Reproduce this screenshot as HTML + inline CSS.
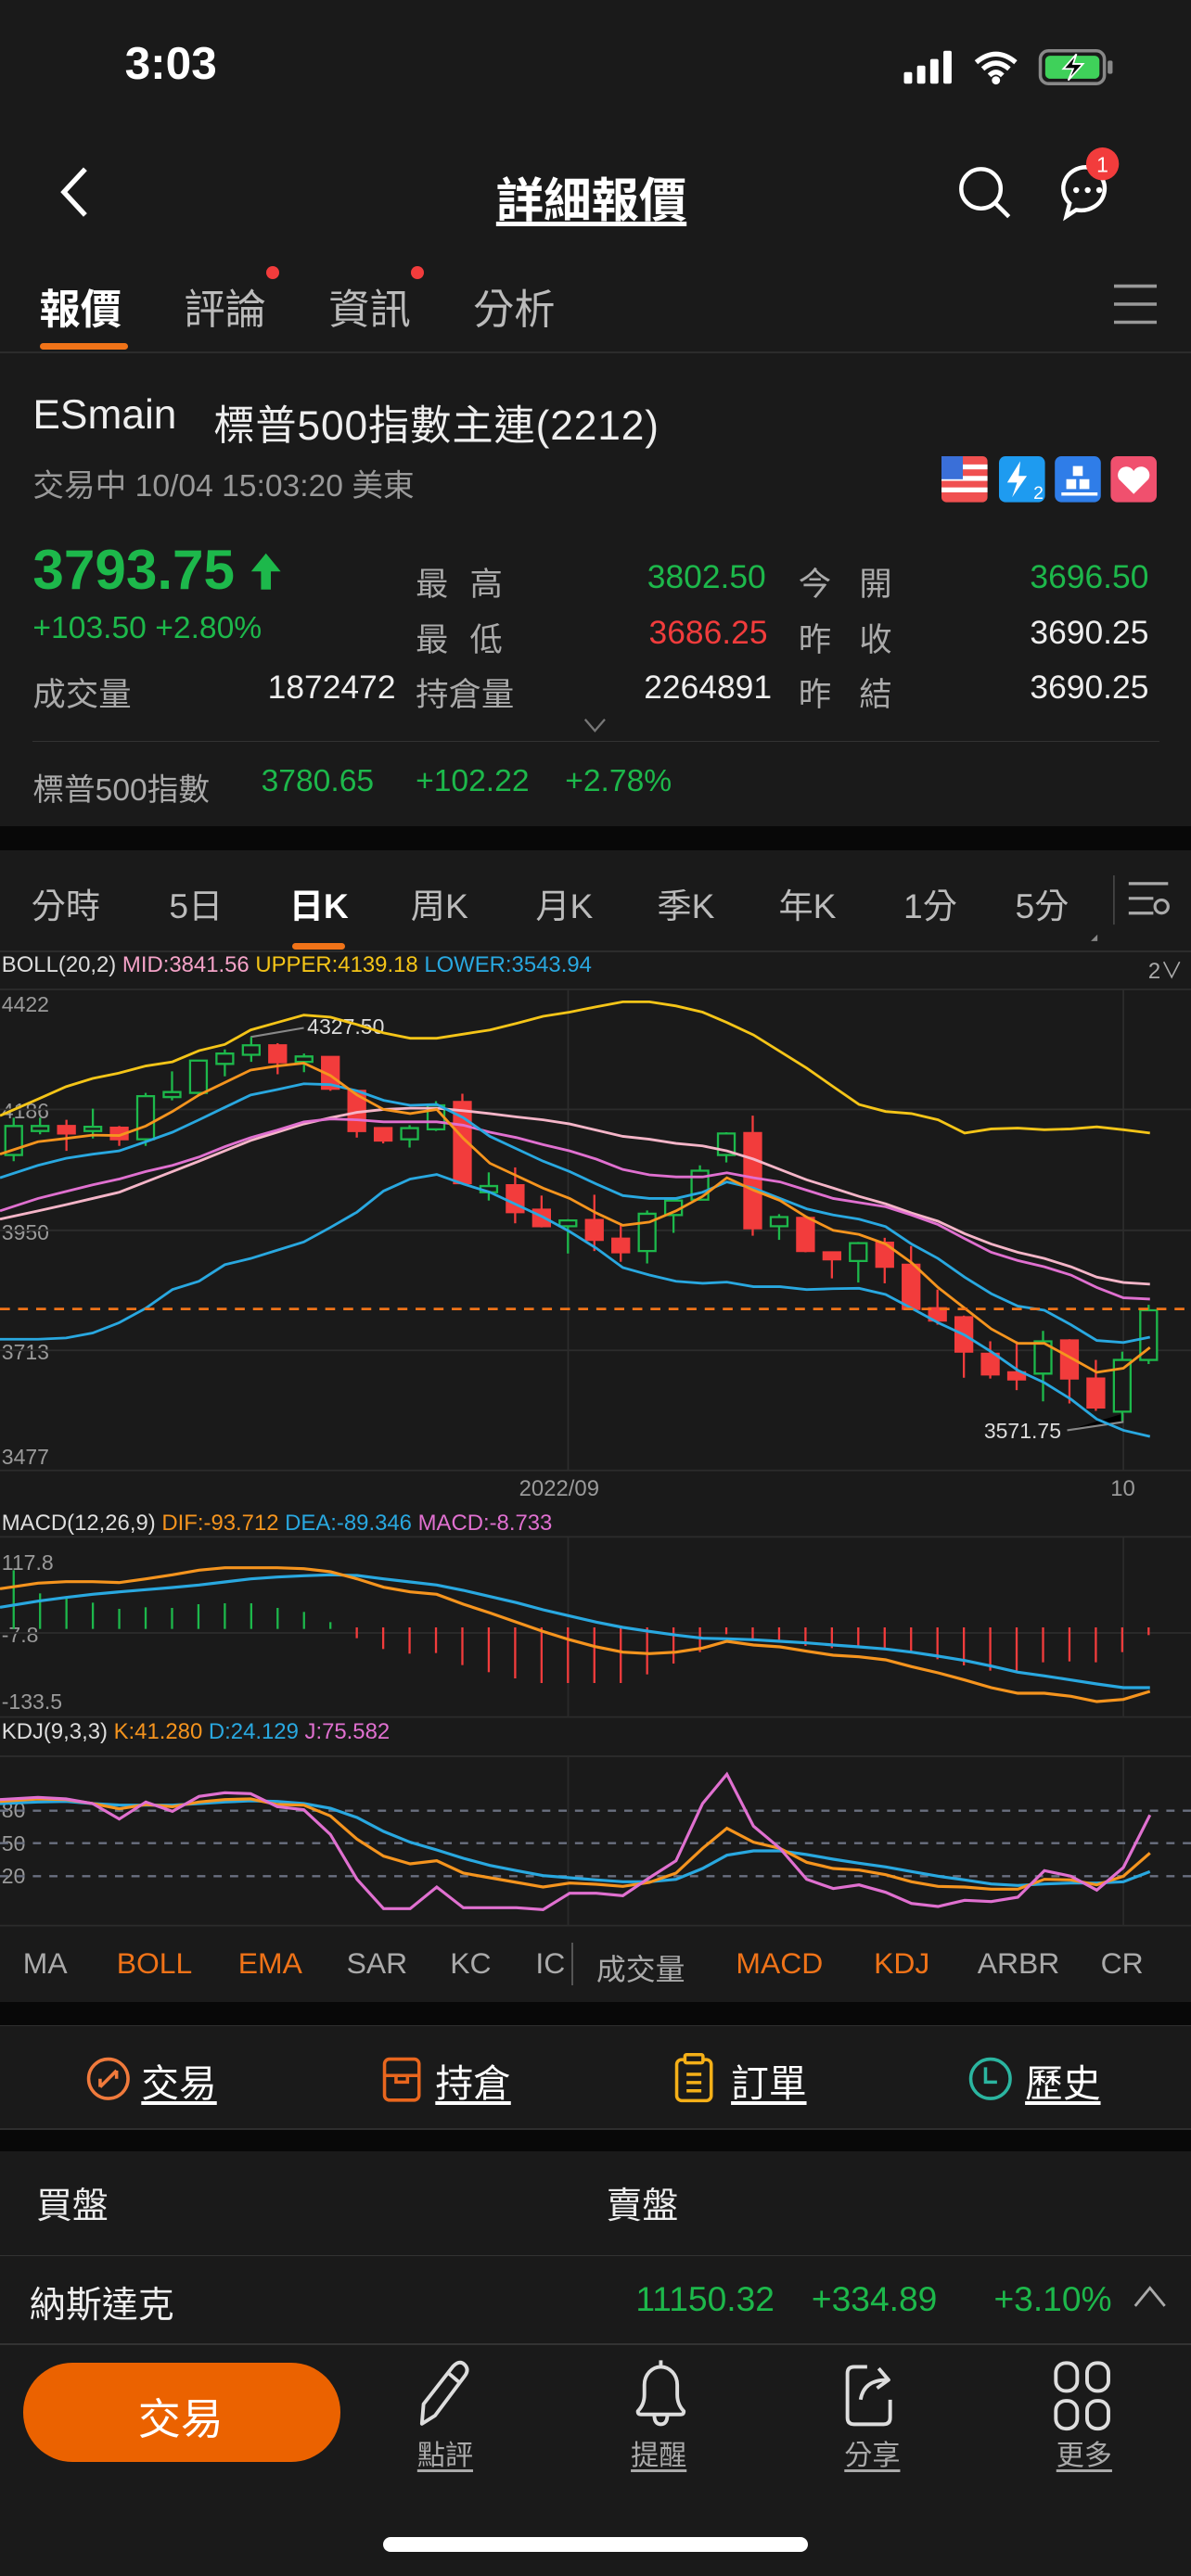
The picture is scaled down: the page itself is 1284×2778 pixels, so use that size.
<!DOCTYPE html>
<html><head><meta charset="utf-8">
<style>
html,body{margin:0;padding:0;background:#1a1a1a;}
body{zoom:1.771;width:725px;height:1568.6px;position:relative;overflow:hidden;font-family:"Liberation Sans","Noto Sans CJK TC",sans-serif;color:#e6e6e6;}
.a{position:absolute;white-space:nowrap;}
.g{color:#1db84b}.r{color:#f23c3c}.o{color:#f07318}.gr{color:#9a9a9a}
.band{position:absolute;left:0;width:725px;background:#080808;}
.u{text-decoration:underline;text-underline-offset:3px;}
svg{position:absolute;overflow:visible}
</style></head><body>
<div class="a" style="left:76px;top:22px;font-size:28px;font-weight:bold;color:#fff">3:03</div>
<svg style="left:548px;top:30px" width="130" height="24">
<rect x="2" y="14" width="5" height="7" rx="1" fill="#fff"/><rect x="10" y="10" width="5" height="11" rx="1" fill="#fff"/><rect x="18" y="6" width="5" height="15" rx="1" fill="#fff"/><rect x="26" y="1" width="5" height="20" rx="1" fill="#fff"/>
<path d="M46 8 Q58 -2 70 8 M50 12 Q58 5 66 12 M54 16 Q58 12 62 16" stroke="#fff" stroke-width="3" fill="none"/><circle cx="58" cy="19" r="2.5" fill="#fff"/>
<rect x="85" y="1" width="39" height="20" rx="5" fill="none" stroke="#888" stroke-width="2"/><rect x="88" y="4" width="33" height="14" rx="3" fill="#3fd15a"/><rect x="126" y="7" width="3" height="8" rx="1" fill="#888"/>
<path d="M107 3 L99 12 H105 L102 19 L111 9 H105 Z" fill="#000" stroke="#fff" stroke-width="1"/>
</svg>
<svg style="left:34px;top:100px" width="24" height="36"><path d="M18 3 L5 17 L18 31" stroke="#fff" stroke-width="3" fill="none"/></svg>
<div class="a u" style="left:302px;top:98px;font-size:29px;font-weight:bold;color:#fff">詳細報價</div>
<svg style="left:582px;top:100px" width="36" height="36"><circle cx="15" cy="15" r="12" stroke="#fff" stroke-width="2.5" fill="none"/><path d="M24 24 L32 32" stroke="#fff" stroke-width="2.5"/></svg>
<svg style="left:643px;top:90px" width="48" height="46"><path d="M18 12 A14 13 0 1 1 12 38 L6 42 L8 34 A14 13 0 0 1 18 12Z" stroke="#fff" stroke-width="2.5" fill="none"/><circle cx="12" cy="26" r="1.8" fill="#fff"/><circle cx="19" cy="26" r="1.8" fill="#fff"/><circle cx="26" cy="26" r="1.8" fill="#fff"/><circle cx="28" cy="10" r="10" fill="#f23c3c"/><text x="28" y="15" font-size="13" fill="#fff" text-anchor="middle" font-family="Liberation Sans">1</text></svg>
<div class="a" style="left:24px;top:168px;font-size:25px;font-weight:bold;color:#fff">報價</div>
<div class="a" style="left:24px;top:209px;width:54px;height:4px;background:#f07318;border-radius:2px"></div>
<div class="a" style="left:112px;top:168px;font-size:25px;color:#bbb">評論</div>
<div class="a" style="left:162px;top:162px;width:8px;height:8px;border-radius:4px;background:#f23c3c"></div>
<div class="a" style="left:200px;top:168px;font-size:25px;color:#bbb">資訊</div>
<div class="a" style="left:250px;top:162px;width:8px;height:8px;border-radius:4px;background:#f23c3c"></div>
<div class="a" style="left:288px;top:168px;font-size:25px;color:#bbb">分析</div>
<svg style="left:678px;top:172px" width="28" height="28"><path d="M0 2H26M0 13H26M0 24H26" stroke="#999" stroke-width="2"/></svg>
<div class="a" style="left:0;top:214px;width:725px;height:1px;background:#2c2c2c"></div>
<div class="a" style="left:20px;top:239px;font-size:25px;color:#eee">ESmain</div>
<div class="a" style="left:130px;top:239px;font-size:25px;color:#eee;letter-spacing:0.5px">標普500指數主連(2212)</div>
<div class="a" style="left:20px;top:280px;font-size:19px;color:#999">交易中 10/04 15:03:20 美東</div>
<svg style="left:573px;top:278px" width="132" height="30">
<rect x="0" y="0" width="28" height="28" rx="3" fill="#f05050"/><rect x="0" y="5" width="28" height="3" fill="#fff"/><rect x="0" y="12" width="28" height="3" fill="#fff"/><rect x="0" y="19" width="28" height="3" fill="#fff"/><rect x="0" y="0" width="13" height="14" fill="#3a6fd8"/>
<rect x="35" y="0" width="28" height="28" rx="4" fill="#1e9bf0"/><path d="M48 3 L40 16 H46 L43 25 L52 12 H47 Z" fill="#fff"/><text x="56" y="26" font-size="11" fill="#fff" font-family="Liberation Sans">2</text>
<rect x="69" y="0" width="28" height="28" rx="4" fill="#2f7de8"/><path d="M80 6h6v6h-6zM76 14h6v6h-6zM84 14h6v6h-6zM73 22h22v2h-22z" fill="#fff"/>
<rect x="103" y="0" width="28" height="28" rx="4" fill="#f0506e"/><path d="M117 23 L108 14 A5 5 0 0 1 117 9 A5 5 0 0 1 126 14 Z" fill="#fff"/>
</svg>
<div class="a g" style="left:20px;top:327px;font-size:34px;font-weight:bold">3793.75</div>
<svg style="left:152px;top:336px" width="22" height="24"><path d="M10 1 L19 12 H13 V23 H7 V12 H1 Z" fill="#1db84b"/></svg>
<div class="a g" style="left:20px;top:372px;font-size:19px">+103.50 +2.80%</div>
<div class="a" style="left:20px;top:407px;font-size:20px;color:#aaa">成交量</div>
<div class="a" style="left:163px;top:407px;font-size:20px;color:#eee">1872472</div>
<div class="a" style="left:253px;top:340px;font-size:20px;color:#aaa;letter-spacing:13px">最高</div>
<div class="a" style="left:253px;top:374px;font-size:20px;color:#aaa;letter-spacing:13px">最低</div>
<div class="a" style="left:253px;top:407px;font-size:20px;color:#aaa">持倉量</div>
<div class="a g" style="left:394px;top:340px;font-size:20px">3802.50</div>
<div class="a r" style="left:395px;top:374px;font-size:20px">3686.25</div>
<div class="a" style="left:392px;top:407px;font-size:20px;color:#eee">2264891</div>
<div class="a" style="left:486px;top:340px;font-size:20px;color:#aaa;letter-spacing:17px">今開</div>
<div class="a" style="left:486px;top:374px;font-size:20px;color:#aaa;letter-spacing:17px">昨收</div>
<div class="a" style="left:486px;top:407px;font-size:20px;color:#aaa;letter-spacing:17px">昨結</div>
<div class="a g" style="left:627px;top:340px;font-size:20px">3696.50</div>
<div class="a" style="left:627px;top:374px;font-size:20px;color:#eee">3690.25</div>
<div class="a" style="left:627px;top:407px;font-size:20px;color:#eee">3690.25</div>
<svg style="left:355px;top:437px" width="14" height="10"><path d="M1 1 L7 8 L13 1" stroke="#777" stroke-width="1.3" fill="none"/></svg>
<div class="a" style="left:20px;top:451px;width:686px;height:1px;background:#333"></div>
<div class="a" style="left:20px;top:465px;font-size:19px;color:#aaa">標普500指數</div>
<div class="a g" style="left:159px;top:465px;font-size:19px">3780.65</div>
<div class="a g" style="left:253px;top:465px;font-size:19px">+102.22</div>
<div class="a g" style="left:344px;top:465px;font-size:19px">+2.78%</div>
<div class="band" style="top:503px;height:15px"></div>
<div class="a" style="left:19px;top:535px;font-size:21px;color:#bbb">分時</div>
<div class="a" style="left:103px;top:535px;font-size:21px;color:#bbb">5日</div>
<div class="a" style="left:176px;top:535px;font-size:21px;color:#fff;font-weight:bold">日K</div>
<div class="a" style="left:178px;top:574px;width:32px;height:4px;background:#f07318;border-radius:2px"></div>
<div class="a" style="left:250px;top:535px;font-size:21px;color:#bbb">周K</div>
<div class="a" style="left:326px;top:535px;font-size:21px;color:#bbb">月K</div>
<div class="a" style="left:400px;top:535px;font-size:21px;color:#bbb">季K</div>
<div class="a" style="left:474px;top:535px;font-size:21px;color:#bbb">年K</div>
<div class="a" style="left:550px;top:535px;font-size:21px;color:#bbb">1分</div>
<div class="a" style="left:618px;top:535px;font-size:21px;color:#bbb">5分</div>
<svg style="left:660px;top:533px" width="55" height="40"><path d="M18 0V30" stroke="#444"/><path d="M8 36 L8 40 L4 40Z" fill="#888"/><path d="M27 5H51M27 14H42M27 23H42" stroke="#aaa" stroke-width="1.8"/><circle cx="47" cy="19" r="4" stroke="#aaa" stroke-width="1.8" fill="none"/></svg>
<div class="a" style="left:0;top:579px;width:725px;height:1px;background:#2c2c2c"></div>
<div class="a" style="left:1px;top:580px;font-size:13.5px"><span style="color:#ddd">BOLL(20,2)</span> <span style="color:#f5a3c8">MID:3841.56</span> <span style="color:#f5c518">UPPER:4139.18</span> <span style="color:#29a8e0">LOWER:3543.94</span></div>
<div class="a" style="left:699px;top:580px;font-size:13.5px;color:#aaa">2∨</div>
<div class="a gr" style="left:1px;top:604px;font-size:13px">4422</div>
<div class="a gr" style="left:1px;top:669px;font-size:13px">4186</div>
<div class="a gr" style="left:1px;top:743px;font-size:13px">3950</div>
<div class="a gr" style="left:1px;top:816px;font-size:13px">3713</div>
<div class="a gr" style="left:1px;top:880px;font-size:13px">3477</div>
<div class="a" style="left:187px;top:618px;font-size:13px;color:#ddd">4327.50</div>
<div class="a" style="left:599px;top:864px;font-size:13px;color:#ddd">3571.75</div>
<div class="a gr" style="left:316px;top:899px;font-size:13.5px">2022/09</div>
<div class="a gr" style="left:676px;top:899px;font-size:13.5px">10</div>
<svg id="main" style="left:0;top:564.6px" width="725" height="395.3" viewBox="0 0 1568 1568" preserveAspectRatio="none"></svg>
<div class="a" style="left:1px;top:920px;font-size:13.5px"><span style="color:#ddd">MACD(12,26,9)</span> <span style="color:#f5941e">DIF:-93.712</span> <span style="color:#29a8e0">DEA:-89.346</span> <span style="color:#e070d0">MACD:-8.733</span></div>
<div class="a gr" style="left:1px;top:944px;font-size:13px">117.8</div>
<div class="a gr" style="left:1px;top:988px;font-size:13px">-7.8</div>
<div class="a gr" style="left:1px;top:1029px;font-size:13px">-133.5</div>
<div class="a" style="left:1px;top:1047px;font-size:13.5px"><span style="color:#ddd">KDJ(9,3,3)</span> <span style="color:#f5941e">K:41.280</span> <span style="color:#29a8e0">D:24.129</span> <span style="color:#e070d0">J:75.582</span></div>
<div class="a gr" style="left:1px;top:1095px;font-size:13px">80</div>
<div class="a gr" style="left:1px;top:1115px;font-size:13px">50</div>
<div class="a gr" style="left:1px;top:1135px;font-size:13px">20</div>
<svg id="sub" style="left:0;top:931.7px" width="725" height="254.1" viewBox="0 -150 1568 1350" preserveAspectRatio="none"></svg>
<div class="a" style="left:14px;top:1185px;font-size:18px;color:#aaa">MA</div>
<div class="a o" style="left:71px;top:1185px;font-size:18px">BOLL</div>
<div class="a o" style="left:145px;top:1185px;font-size:18px">EMA</div>
<div class="a" style="left:211px;top:1185px;font-size:18px;color:#aaa">SAR</div>
<div class="a" style="left:274px;top:1185px;font-size:18px;color:#aaa">KC</div>
<div class="a" style="left:326px;top:1185px;font-size:18px;color:#aaa">IC</div>
<div class="a" style="left:348px;top:1183px;width:1px;height:26px;background:#555"></div>
<div class="a" style="left:363px;top:1185px;font-size:18px;color:#aaa">成交量</div>
<div class="a o" style="left:448px;top:1185px;font-size:18px">MACD</div>
<div class="a o" style="left:532px;top:1185px;font-size:18px">KDJ</div>
<div class="a" style="left:595px;top:1185px;font-size:18px;color:#aaa">ARBR</div>
<div class="a" style="left:670px;top:1185px;font-size:18px;color:#aaa">CR</div>
<div class="band" style="top:1219px;height:14px"></div>
<div class="a" style="left:0;top:1233px;width:725px;height:1px;background:#2e2e2e"></div>
<svg style="left:52px;top:1252px" width="28" height="28"><circle cx="14" cy="14" r="12" stroke="#f07a3c" stroke-width="2" fill="none"/><path d="M9 19 L19 9 M19 9 V14 M9 19 V14" stroke="#f07a3c" stroke-width="2" fill="none"/></svg>
<div class="a u" style="left:86px;top:1250px;font-size:23px;color:#fff">交易</div>
<svg style="left:232px;top:1252px" width="26" height="30"><rect x="2" y="2" width="21" height="25" rx="3" stroke="#e8661e" stroke-width="2" fill="none"/><path d="M2 12H23M9 12V16H16V12" stroke="#e8661e" stroke-width="2" fill="none"/></svg>
<div class="a u" style="left:265px;top:1250px;font-size:23px;color:#fff">持倉</div>
<svg style="left:410px;top:1250px" width="26" height="32"><rect x="2" y="4" width="21" height="25" rx="3" stroke="#f5b018" stroke-width="2" fill="none"/><rect x="7" y="1" width="11" height="5" rx="1" stroke="#f5b018" stroke-width="2" fill="#1a1a1a"/><path d="M8 13H17M8 18H17M8 23H17" stroke="#f5b018" stroke-width="2"/></svg>
<div class="a u" style="left:445px;top:1250px;font-size:23px;color:#fff">訂單</div>
<svg style="left:589px;top:1252px" width="28" height="28"><circle cx="14" cy="14" r="12" stroke="#2bb5a0" stroke-width="2" fill="none"/><path d="M11 7 V16 H18" stroke="#2bb5a0" stroke-width="2" fill="none"/></svg>
<div class="a u" style="left:624px;top:1250px;font-size:23px;color:#fff">歷史</div>
<div class="band" style="top:1297px;height:13px;background:#080808"></div>
<div class="a" style="left:0;top:1296px;width:725px;height:1px;background:#2e2e2e"></div>
<div class="a" style="left:22px;top:1326px;font-size:22px;color:#eee">買盤</div>
<div class="a" style="left:369px;top:1326px;font-size:22px;color:#eee">賣盤</div>
<div class="a" style="left:0;top:1373px;width:725px;height:1px;background:#333"></div>
<div class="a" style="left:18px;top:1386px;font-size:22px;color:#eee">納斯達克</div>
<div class="a g" style="left:387px;top:1388px;font-size:21px">11150.32</div>
<div class="a g" style="left:494px;top:1388px;font-size:21px">+334.89</div>
<div class="a g" style="left:605px;top:1388px;font-size:21px">+3.10%</div>
<svg style="left:690px;top:1390px" width="22" height="16"><path d="M1 14 L10 3 L19 14" stroke="#aaa" stroke-width="1.6" fill="none"/></svg>
<div class="a" style="left:0;top:1427px;width:725px;height:1px;background:#333"></div>
<div class="a" style="left:14px;top:1439px;width:193px;height:60px;border-radius:30px;background:#eb6200"></div>
<div class="a" style="left:84px;top:1453px;font-size:26px;color:#fff">交易</div>
<svg style="left:252px;top:1436px" width="40" height="44"><path d="M5 40 L6 28 L24 5 Q28 1 31 4 Q34 7 31 11 L13 35 Z M21 9 L28 15" stroke="#ddd" stroke-width="2.2" fill="none" stroke-linejoin="round"/></svg>
<div class="a u" style="left:254px;top:1481px;font-size:17px;color:#aaa">點評</div>
<svg style="left:382px;top:1434px" width="40" height="48"><path d="M8 36 Q6 36 6 34 Q10 30 10 24 V18 A10 11 0 0 1 30 18 V24 Q30 30 34 34 Q34 36 32 36 Z M16 36 Q16 42 20 42 Q24 42 24 36 M20 3 V7" stroke="#ddd" stroke-width="2.2" fill="none" stroke-linejoin="round"/></svg>
<div class="a u" style="left:384px;top:1481px;font-size:17px;color:#aaa">提醒</div>
<svg style="left:510px;top:1434px" width="40" height="48"><path d="M18 7 H10 Q6 7 6 11 V38 Q6 42 10 42 H28 Q32 42 32 38 V27 M14 27 Q16 15 30 15 M25 8 L31 15 L24 20" stroke="#ddd" stroke-width="2.2" fill="none" stroke-linejoin="round"/></svg>
<div class="a u" style="left:514px;top:1481px;font-size:17px;color:#aaa">分享</div>
<svg style="left:640px;top:1436px" width="40" height="44"><rect x="3" y="3" width="13" height="17" rx="6" stroke="#ddd" stroke-width="2.2" fill="none"/><rect x="22" y="3" width="13" height="17" rx="6" stroke="#ddd" stroke-width="2.2" fill="none"/><rect x="3" y="26" width="13" height="17" rx="6" stroke="#ddd" stroke-width="2.2" fill="none"/><rect x="22" y="26" width="13" height="17" rx="6" stroke="#ddd" stroke-width="2.2" fill="none"/></svg>
<div class="a u" style="left:643px;top:1481px;font-size:17px;color:#aaa">更多</div>
<div class="a" style="left:233px;top:1545px;width:259px;height:9px;border-radius:5px;background:#fff"></div>
<script>
const NS="http://www.w3.org/2000/svg";
function el(svg,tag,attrs){const e=document.createElementNS(NS,tag);for(const k in attrs)e.setAttribute(k,attrs[k]);e.setAttribute("vector-effect","non-scaling-stroke");svg.appendChild(e);return e;}
const xs=[0,50,87,122,157,192,227,262,296,330,365,400,435,470,505,540,575,610,645,680,715,750,785,820,855,890,925,957,992,1027,1062,1097,1131,1166,1200,1235,1270,1305,1340,1375,1410,1444,1479,1514];
function line(svg,ys,c,w,xarr){let d="";(xarr||xs).forEach((x,i)=>{d+=(i?"L":"M")+x+" "+ys[i];});el(svg,"path",{d:d,stroke:c,"stroke-width":w,fill:"none"});}
const M=document.getElementById("main");
[150,440,732,1022,1312].forEach(y=>el(M,"path",{d:"M0 "+y+"H1568",stroke:"#2c2c2c","stroke-width":1}));
[748,1479].forEach(x=>el(M,"path",{d:"M"+x+" 150V1312",stroke:"#2c2c2c","stroke-width":1}));
el(M,"path",{d:"M330 265 L400 243",stroke:"#888","stroke-width":1.2});
el(M,"path",{d:"M1405 1215 L1478 1195 V1175",stroke:"#888","stroke-width":1.2});
const cx=[];for(let i=0;i<44;i++)cx.push(18+34.75*i);
const C=[["g",480,550,460,565],["g",480,492,460,500],["r",480,498,465,540],["g",482,492,438,510],["r",484,512,480,528],["g",408,512,400,528],["g",398,410,348,418],["g",322,400,322,405],["g",305,330,295,360],["g",285,308,265,325],["r",285,326,280,355],["g",312,325,305,350],["r",313,390,313,395],["r",395,492,395,508],["r",485,515,485,522],["g",485,512,478,532],["g",430,488,420,492],["r",422,618,402,620],["g",625,640,592,660],["r",623,688,580,715],["r",682,722,648,725],["g",708,722,705,788],["r",707,755,646,782],["r",752,785,720,808],["g",692,782,684,812],["g",660,695,655,738],["g",588,658,575,660],["g",498,550,495,568],["r",497,727,455,745],["g",700,722,693,755],["r",702,782,700,785],["r",785,802,785,848],["g",763,806,760,858],["r",762,820,750,860],["r",815,922,770,922],["r",920,950,875,960],["r",942,1025,938,1088],["r",1030,1080,1000,1090],["r",1075,1092,1000,1118],["g",1000,1078,975,1145],["r",998,1090,995,1150],["r",1090,1160,1045,1168],["g",1045,1170,1025,1192],["g",925,1045,912,1055]];
C.forEach((c,i)=>{const x=cx[i],col=c[0]=="g"?"#1db84b":"#f23c3c";
el(M,"path",{d:"M"+x+" "+c[3]+"V"+c[4],stroke:col,"stroke-width":1.3});
el(M,"rect",{x:x-11,y:c[1],width:22,height:Math.max(c[2]-c[1],4),fill:c[0]=="g"?"#1a1a1a":col,stroke:col,"stroke-width":1.3});});
line(M,[455,415,385,365,352,335,325,298,283,248,230,212,217,235,255,268,268,258,248,232,215,205,192,180,180,190,205,230,260,300,340,385,428,445,450,465,497,487,485,489,487,482,489,497],"#f5c518",1.6);
line(M,[705,685,670,655,640,615,590,565,540,515,495,475,460,447,440,437,437,443,450,458,465,475,490,505,512,522,528,540,560,585,610,630,650,668,690,710,740,765,785,800,820,845,858,862],"#f5b5c8",1.6);
line(M,[685,655,638,622,608,590,575,555,530,508,490,470,463,465,470,470,470,478,495,508,525,540,560,585,598,603,603,593,605,615,635,655,665,675,695,718,752,785,805,820,840,870,895,898],"#e070d0",1.6);
line(M,[605,575,558,548,540,518,495,465,435,405,392,378,380,395,418,430,428,460,505,535,565,590,620,648,655,655,640,615,630,655,680,695,705,723,765,800,845,885,915,925,960,998,1003,990],"#29a8e0",1.6);
line(M,[548,518,510,502,503,480,445,405,375,345,335,328,358,405,440,450,440,510,570,600,630,655,690,720,712,685,650,605,635,660,700,732,742,765,810,870,920,970,1005,1005,1040,1075,1065,1015],"#f5941e",1.6);
line(M,[995,995,992,980,955,920,875,855,815,800,780,760,725,688,637,608,597,620,640,670,700,735,775,822,840,855,860,857,868,868,875,873,872,887,920,955,985,1025,1070,1100,1140,1188,1215,1230],"#29a8e0",1.6);
el(M,"path",{d:"M0 922H1568",stroke:"#f07318","stroke-width":1.6,"stroke-dasharray":"6 5"});
const S=document.getElementById("sub");
[183,455,582,1130].forEach(y=>el(S,"path",{d:"M0 "+y+"H1568",stroke:"#2c2c2c","stroke-width":1}));
[748,1479].forEach(x=>{el(S,"path",{d:"M"+x+" -130V455",stroke:"#2a2a2a","stroke-width":1});el(S,"path",{d:"M"+x+" 582V1130",stroke:"#2a2a2a","stroke-width":1});});
el(S,"path",{d:"M0 -128H1568",stroke:"#2c2c2c","stroke-width":1});
const gt=[-20,55,72,85,105,100,102,90,87,87,102,115,148];
gt.forEach((t,i)=>el(S,"path",{d:"M"+cx[i]+" "+t+"V170",stroke:"#1db84b","stroke-width":1.3}));
const rb=[200,235,250,248,287,310,330,345,345,345,345,317,282,245,187,205,205,225,232,228,232,248,268,288,305,305,278,275,278,245,190];
rb.forEach((b,i)=>el(S,"path",{d:"M"+cx[i+13]+" 165V"+b,stroke:"#f23c3c","stroke-width":1.3}));
line(S,[100,80,68,58,50,43,36,28,18,8,2,-2,-5,-3,8,18,28,45,65,85,108,128,148,165,178,190,200,202,205,210,215,222,228,235,245,258,272,290,310,322,335,348,360,360],"#29a8e0",1.8);
line(S,[40,22,17,17,20,8,-5,-20,-28,-28,-28,-25,-15,8,35,50,58,90,118,148,178,205,228,245,250,245,232,210,222,228,242,255,260,270,292,312,335,360,378,378,388,405,398,372],"#f5941e",1.8);
[758,863,970].forEach(y=>el(S,"path",{d:"M0 "+y+"H1568",stroke:"#6a7080","stroke-width":1.3,"stroke-dasharray":"5 5"}));
line(S,[735,730,728,735,740,740,740,735,730,726,728,735,750,780,825,860,885,912,935,952,968,975,982,988,988,980,945,902,888,888,900,915,928,940,955,970,982,995,1000,995,992,992,988,955],"#29a8e0",1.8);
line(S,[728,720,722,735,752,738,745,730,722,720,738,740,775,850,905,930,920,960,975,990,1005,992,996,1003,990,960,880,815,860,880,925,945,950,965,988,1003,1005,1012,1012,980,982,998,970,895],"#f5941e",1.8);
line(S,[722,715,720,735,785,730,760,712,700,703,745,755,835,980,1075,1075,1005,1072,1072,1072,1078,1025,1025,1033,975,920,735,640,808,880,980,1010,998,1022,1058,1068,1048,1052,1038,952,970,1015,942,772],"#e070d0",1.8);
</script>
</body></html>
